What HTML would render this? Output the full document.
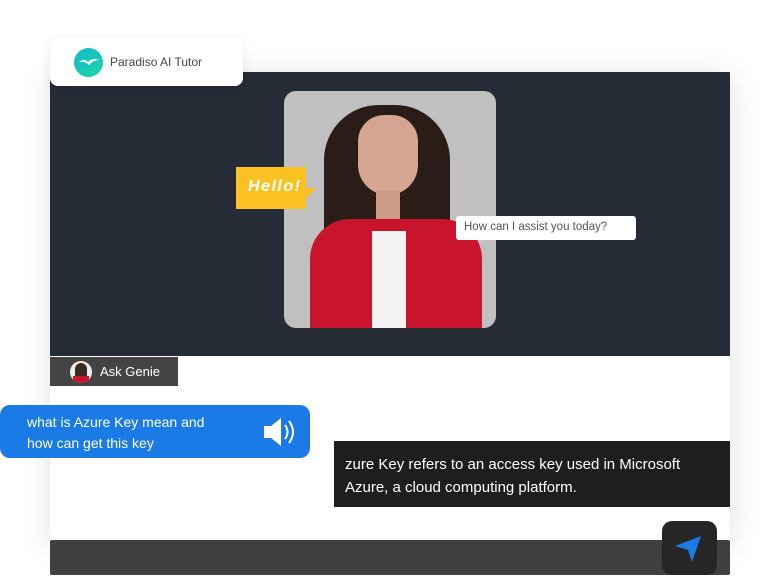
<!DOCTYPE html>
<html><head><style>
*{margin:0;padding:0;box-sizing:border-box}
body{width:768px;height:576px;background:#fff;position:relative;overflow:hidden;font-family:"Liberation Sans",sans-serif}
.a{position:absolute}
</style></head><body>
<div class="a" style="left:50px;top:72px;width:680px;height:470px;box-shadow:0 4px 30px rgba(0,0,0,.12);background:#fff"></div>
<div class="a" style="left:50px;top:72px;width:680px;height:284px;background:#252c35"></div>
<div class="a" style="left:50px;top:38px;width:193px;height:48px;background:#fff;border-radius:8px;box-shadow:0 2px 12px rgba(0,0,0,.08)"></div>
<div class="a" style="left:74px;top:48px;width:29px;height:29px;border-radius:50%;background:linear-gradient(135deg,#18b8c8,#1ad6a8)"></div>
<svg class="a" style="left:78px;top:56px" width="22" height="12"><path d="M1 6 Q6 2 10 6 Q15 1 21 4 Q15 4 11 9 Q7 5 1 6Z" fill="#fff"/></svg>
<div class="a" style="left:110px;top:55px;font-size:12px;color:#444">Paradiso AI Tutor</div>
<div class="a" style="left:284px;top:91px;width:212px;height:237px;background:#c0c0c0;border-radius:12px;overflow:hidden">
 <div class="a" style="left:40px;top:14px;width:126px;height:225px;background:#2a1d18;border-radius:55px 55px 10px 10px"></div>
 <div class="a" style="left:74px;top:24px;width:60px;height:80px;background:#d6a592;border-radius:28px 28px 32px 32px"></div>
 <div class="a" style="left:92px;top:100px;width:24px;height:30px;background:#cf9c88"></div>
 <div class="a" style="left:26px;top:128px;width:172px;height:120px;background:#c8152b;border-radius:40px 40px 0 0"></div>
 <div class="a" style="left:88px;top:140px;width:34px;height:100px;background:#f2f2f2"></div>
</div>
<div class="a" style="left:236px;top:167px;width:70px;height:42px;background:#fbc122"></div>
<div class="a" style="left:304px;top:188px;width:0;height:0;border-left:12px solid #fbc122;border-bottom:12px solid transparent"></div>
<div class="a" style="left:248px;top:178px;font-size:16px;color:#fff;font-style:italic;font-weight:bold;letter-spacing:1.5px">Hello!</div>
<div class="a" style="left:456px;top:216px;width:180px;height:24px;background:#fff;border-radius:3px;font-size:11.5px;color:#555;padding:5px 8px">How can I assist you today?</div>
<div class="a" style="left:50px;top:357px;width:128px;height:29px;background:#444"></div>
<div class="a" style="left:70px;top:361px;width:22px;height:22px;border-radius:50%;background:#eee;overflow:hidden"><div class="a" style="left:5px;top:2px;width:12px;height:18px;background:#3a2a22;border-radius:6px"></div><div class="a" style="left:3px;top:15px;width:16px;height:8px;background:#c8152b"></div></div>
<div class="a" style="left:100px;top:364px;font-size:13px;color:#fff">Ask Genie</div>
<div class="a" style="left:0;top:405px;width:310px;height:53px;background:#1a7ae6;border-radius:10px"></div>
<div class="a" style="left:27px;top:412px;font-size:14px;color:#fff;line-height:21px">what is Azure Key mean and<br>how can get this key</div>
<svg class="a" style="left:262px;top:416px" width="34" height="32"><path d="M2 10h7l10-8v28l-10-8H2z" fill="#fff"/><path d="M23 9q5 7 0 14M27 5q8 11 0 22" stroke="#fff" stroke-width="2" fill="none"/></svg>
<div class="a" style="left:334px;top:441px;width:396px;height:66px;background:#1e1e1e"></div>
<div class="a" style="left:345px;top:453px;font-size:15px;color:#fff;line-height:23px">zure Key refers to an access key used in Microsoft<br>Azure, a cloud computing platform.</div>
<div class="a" style="left:50px;top:540px;width:680px;height:35px;background:#404040;border-radius:2px"></div>
<div class="a" style="left:662px;top:521px;width:55px;height:54px;background:#262626;border-radius:10px"></div>
<svg class="a" style="left:672px;top:532px" width="34" height="34"><path d="M3 14L29 4L20 30L16 18Z" fill="#1a7ae6"/></svg>
</body></html>
